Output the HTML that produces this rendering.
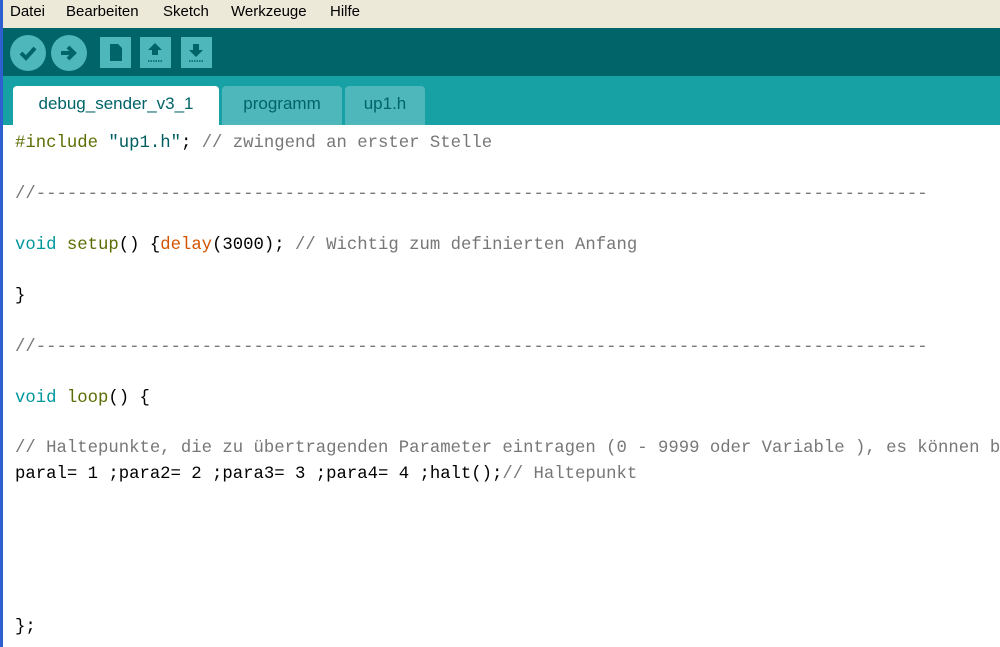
<!DOCTYPE html>
<html><head><meta charset="utf-8"><style>
html,body{margin:0;padding:0;width:1000px;height:647px;overflow:hidden;background:#fff;position:relative}
#menu{position:absolute;left:0;top:0;width:1000px;height:28px;background:#ece9d8;font:15px "Liberation Sans",sans-serif;color:#000}
#menu span{position:absolute;top:3px}
#tb{position:absolute;left:0;top:28px;width:1000px;height:48px;background:#006468}
#tabs{position:absolute;left:0;top:76px;width:1000px;height:49px;background:#17a1a5}
.tab{position:absolute;top:10px;height:39px;background:#4db7bb;border-radius:4px 4px 0 0;font:17px "Liberation Sans",sans-serif;color:#006468;text-align:center;line-height:36px}
.tab.a{background:#fff}
.b{position:absolute;background:#4db7bb}
#edge{position:absolute;left:0;top:0;width:3px;height:647px;background:#2d5fd0}
#code{position:absolute;left:15px;top:131px;margin:0;font:17.3px/25.45px "Liberation Mono",monospace;color:#000;white-space:pre}
.c{color:#777}.k{color:#00979c}.f{color:#5e6d03}.o{color:#d35400}
</style></head><body>
<div id="menu"><span style="left:10px">Datei</span><span style="left:66px">Bearbeiten</span><span style="left:163px">Sketch</span><span style="left:231px">Werkzeuge</span><span style="left:330px">Hilfe</span></div>
<div id="tb">
<div class="b" style="left:10px;top:7px;width:36px;height:36px;border-radius:50%"></div>
<div class="b" style="left:51px;top:7px;width:36px;height:36px;border-radius:50%"></div>
<div class="b" style="left:100px;top:9px;width:31px;height:31px"></div>
<div class="b" style="left:140px;top:9px;width:31px;height:31px"></div>
<div class="b" style="left:181px;top:9px;width:31px;height:31px"></div>
<svg style="position:absolute;left:0;top:0" width="220" height="48">
<path d="M21 25l5 5 9-10" stroke="#006468" stroke-width="4" fill="none"/>
<path d="M61 25h12M68 19l6 6-6 6" stroke="#006468" stroke-width="4" fill="none"/>
<path d="M110 16h8l4 4v13h-12z" fill="#006468"/>
<path d="M155 15l-7 7h4v5h6v-5h4z" fill="#006468"/>
<path d="M196 29l-7-7h4v-6h6v6h4z" fill="#006468"/>
<path d="M148 33h14M189 33h14" stroke="#006468" stroke-width="1.5" stroke-dasharray="1.5 1"/>
</svg>
</div>
<div id="tabs">
<div class="tab a" style="left:13px;width:206px">debug_sender_v3_1</div>
<div class="tab" style="left:222px;width:120px">programm</div>
<div class="tab" style="left:345px;width:80px">up1.h</div>
</div>
<div id="edge"></div>
<pre id="code"><span style="color:#5e6d03">#include</span> <span style="color:#005c5f">"up1.h"</span>; <span class="c">// zwingend an erster Stelle</span>

<span class="c">//--------------------------------------------------------------------------------------</span>

<span class="k">void</span> <span class="f">setup</span>() {<span class="o">delay</span>(3000); <span class="c">// Wichtig zum definierten Anfang</span>

}

<span class="c">//--------------------------------------------------------------------------------------</span>

<span class="k">void</span> <span class="f">loop</span>() {

<span class="c">// Haltepunkte, die zu übertragenden Parameter eintragen (0 - 9999 oder Variable ), es können bis</span>
paral= 1 ;para2= 2 ;para3= 3 ;para4= 4 ;halt();<span class="c">// Haltepunkt</span>





};</pre>
</body></html>
